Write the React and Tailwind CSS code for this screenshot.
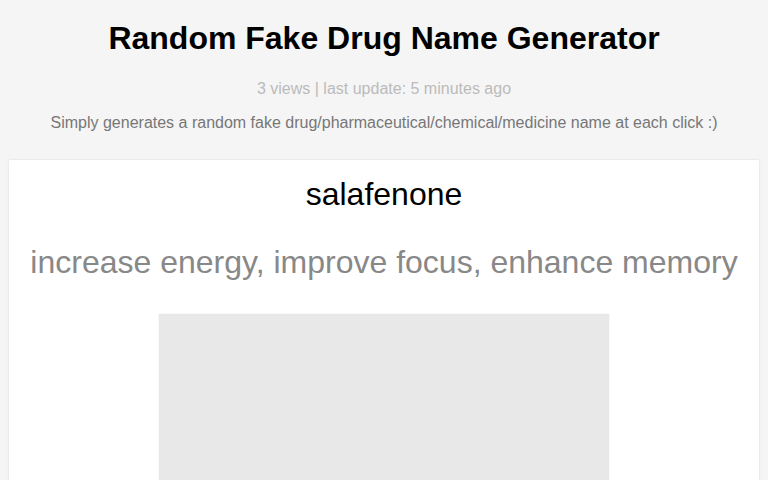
export default function App() {
  return (
    <div className="min-h-screen bg-[#f5f5f5] font-['Liberation_Sans',Arial,sans-serif] overflow-hidden h-[480px]">
      <div className="text-center pt-[18px]">
        <h1 className="text-[32px] leading-[40px] font-bold text-black">Random Fake Drug Name Generator</h1>
        <p className="mt-[21px] text-[16px] leading-[20px] text-[#bbbbbb]">3 views | last update: 5 minutes ago</p>
        <p className="mt-[14px] text-[16px] leading-[20px] text-[#777777]">
          Simply generates a random fake drug/pharmaceutical/chemical/medicine name at each click :)
        </p>
      </div>
      <div className="mx-[9px] mt-[27px] bg-white shadow-[0_0_2px_rgba(0,0,0,0.12)] text-center pt-[14px]">
        <div className="text-[32px] leading-[40px] text-black">salafenone</div>
        <div className="mt-[28px] text-[32px] leading-[40px] text-[#888888]">
          increase energy, improve focus, enhance memory
        </div>
        <div className="mx-auto mt-[32px] w-[450px] h-[250px] bg-[#e8e8e8] shadow-[0_0_1px_rgba(0,0,0,0.15)]"></div>
      </div>
    </div>
  );
}
